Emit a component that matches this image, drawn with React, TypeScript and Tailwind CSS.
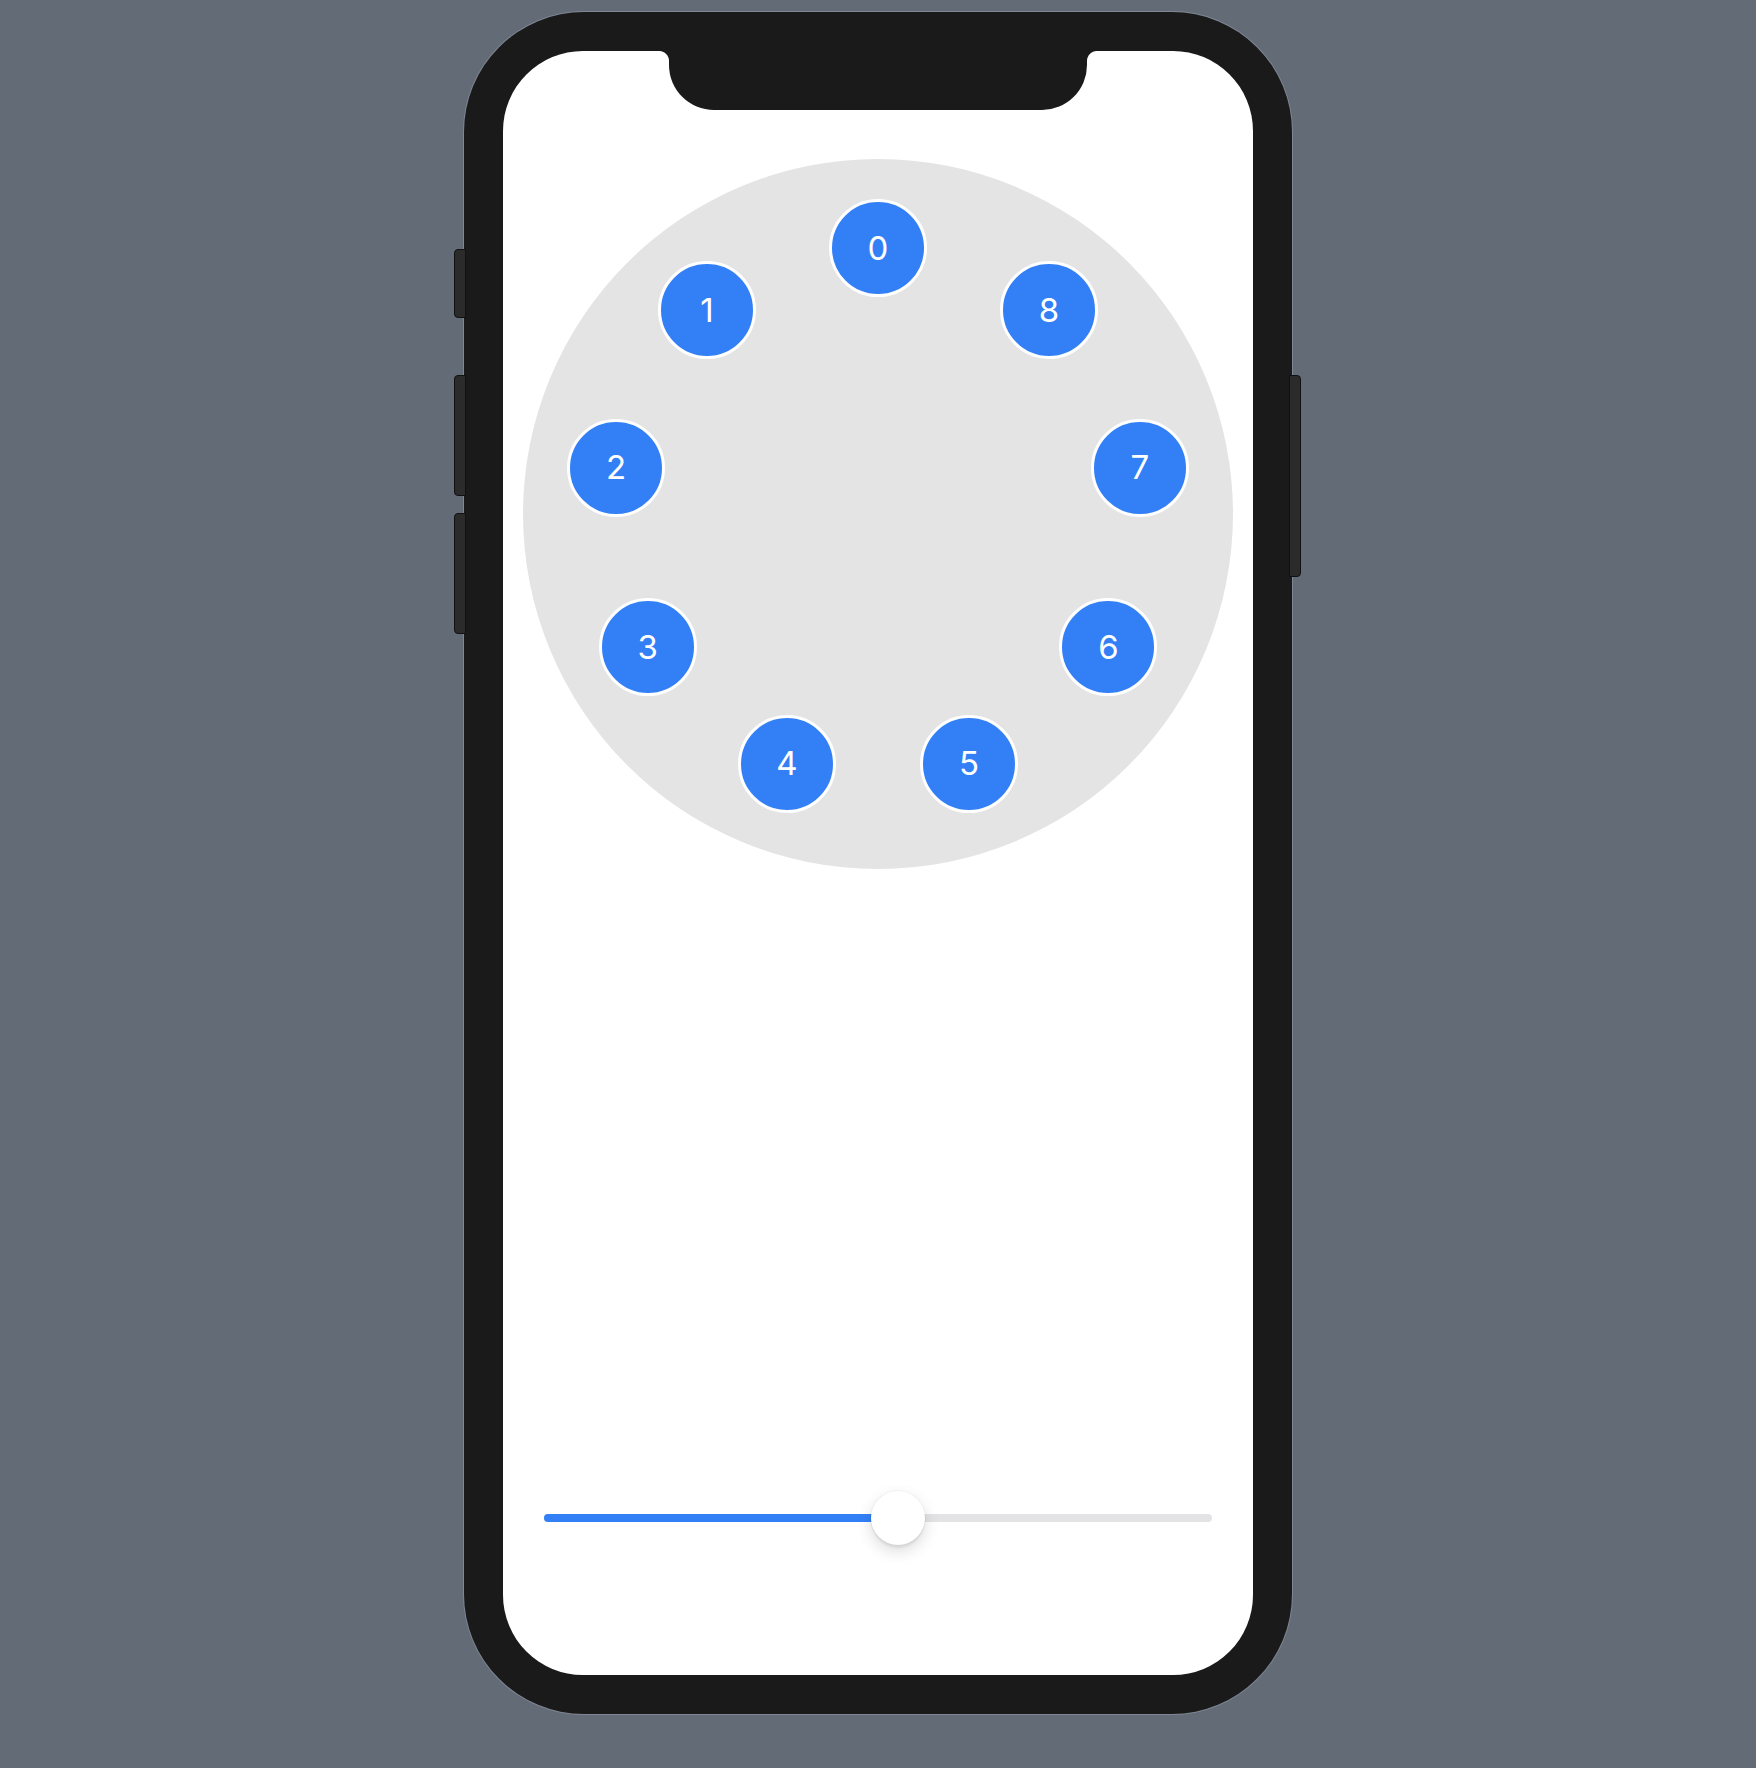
import React from "react";

const DIGITS = [0, 1, 2, 3, 4, 5, 6, 7, 8];
const DIAL = 710;
const RING = 266;
const KEY = 98;

function Dial() {
  const c = DIAL / 2;
  return (
    <div className="relative w-[710px] h-[710px] shrink-0 rounded-full bg-[#e4e4e4]">
      {DIGITS.map((d) => {
        const a = (d * 40 * Math.PI) / 180;
        const x = c - RING * Math.sin(a) - KEY / 2;
        const y = c - RING * Math.cos(a) - KEY / 2;
        return (
          <button
            key={d}
            className="absolute flex items-center justify-center w-[98px] h-[98px] rounded-full border-[3px] border-white bg-[#3380f6] text-white text-[33px] leading-none font-normal"
            style={{ left: x, top: y, fontFamily: "Inter, 'Noto Sans', sans-serif" }}
          >
            {d}
          </button>
        );
      })}
    </div>
  );
}

function Slider() {
  const value = 0.53;
  return (
    <div className="relative w-[668px] h-[54px] shrink-0">
      <div className="absolute left-0 right-0 top-[23px] h-[8px] rounded-full bg-[#e3e3e5]" />
      <div
        className="absolute left-0 top-[23px] h-[8px] rounded-full bg-[#3380f6]"
        style={{ width: `${value * 100}%` }}
      />
      <div
        className="absolute top-0 w-[54px] h-[54px] rounded-full bg-white shadow-[0_6px_16px_rgba(0,0,0,0.14),0_3px_2px_rgba(0,0,0,0.06),0_0_0_1px_rgba(0,0,0,0.03)]"
        style={{ left: `calc(${value * 100}% - 27px)` }}
      />
    </div>
  );
}

export default function App() {
  return (
    <div className="w-full h-[1768px] bg-[#636b77] flex justify-center pt-[12px]">
      <div className="relative w-[828px] h-[1702px] rounded-[120px] bg-[#1a1a1a] p-[39px] shadow-[0_0_0_1px_#7e8794]">
        {/* side keys */}
        <div className="absolute left-[-10px] top-[237px] w-[12px] h-[69px] rounded-l-[4px] bg-[#2b2b2b] border border-[#111]" />
        <div className="absolute left-[-10px] top-[363px] w-[12px] h-[121px] rounded-l-[4px] bg-[#2b2b2b] border border-[#111]" />
        <div className="absolute left-[-10px] top-[501px] w-[12px] h-[121px] rounded-l-[4px] bg-[#2b2b2b] border border-[#111]" />
        <div className="absolute right-[-9px] top-[363px] w-[12px] h-[202px] rounded-r-[4px] bg-[#2b2b2b] border border-[#111]" />

        {/* screen */}
        <div className="relative w-[750px] h-[1624px] rounded-[80px] bg-white overflow-hidden flex flex-col items-center pt-[108px]">
          {/* notch */}
          <div className="absolute top-0 left-1/2 -translate-x-1/2 w-[418px] h-[59px] bg-[#1a1a1a] rounded-b-[45px]">
            <div className="absolute top-0 left-[-10px] w-[10px] h-[10px] bg-[radial-gradient(circle_at_0_100%,transparent_9.5px,#1a1a1a_10.5px)]" />
            <div className="absolute top-0 right-[-10px] w-[10px] h-[10px] bg-[radial-gradient(circle_at_100%_100%,transparent_9.5px,#1a1a1a_10.5px)]" />
          </div>

          <Dial />
          <div className="mt-[622px]">
            <Slider />
          </div>
        </div>
      </div>
    </div>
  );
}
